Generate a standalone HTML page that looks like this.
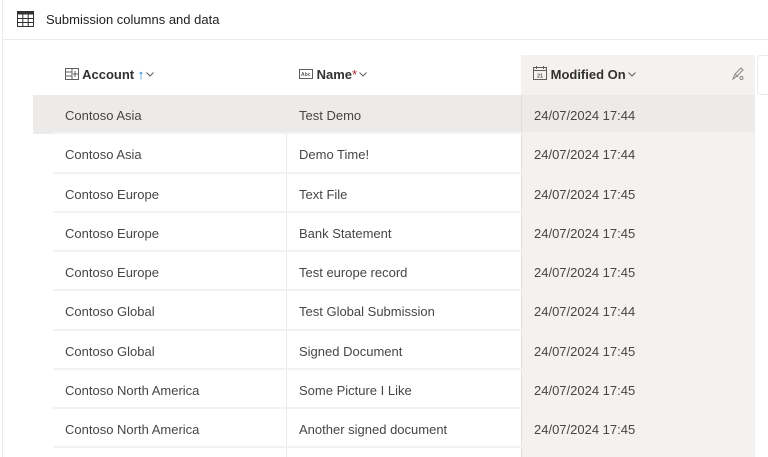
<!DOCTYPE html>
<html><head><meta charset="utf-8"><style>
*{margin:0;padding:0;box-sizing:border-box}
html,body{width:768px;height:457px;overflow:hidden}
body{background:#fff;font-family:"Liberation Sans",sans-serif;position:relative;color:#323130}
.abs{position:absolute}
.hdr{left:2px;top:0;width:766px;height:40px;border-bottom:1px solid #edebe9;border-left:1px solid #edebe9}
.title{left:46px;top:12px;font-size:13px;color:#201f1e}
.th{top:55px;height:39px;font-size:13px;font-weight:bold;color:#323130;line-height:39px}
.row{left:53px;width:702px;height:39.25px;border-bottom:2px solid #f3f2f1}
.cell{position:absolute;top:0;height:100%;line-height:41px;font-size:13px;color:#484644;padding-left:12px}
.c1{left:0;width:234px;border-right:1px solid #edebe9}
.c2{left:234px;width:234px}
.c3{left:468px;width:234px;background:#f3f2f1;border-left:1px solid #e1dfdd}
.chev{display:inline-block;vertical-align:2px;margin-left:2px}
</style></head><body>
<div class="abs hdr"></div>
<svg class="abs" style="left:17px;top:11px" width="17" height="16" viewBox="0 0 17 16"><rect x="0.5" y="0.5" width="16" height="15" fill="none" stroke="#323130"/><rect x="0.5" y="0.5" width="16" height="3" fill="#323130"/><path d="M5.8 3v13M11.2 3v13M0 7.5h17M0 11.5h17" stroke="#323130"/></svg>
<div class="abs title">Submission columns and data</div>
<div class="abs" style="left:521px;top:55px;width:234px;height:40px;background:#f3f2f1"></div>
<div class="abs" style="left:757px;top:55px;width:11px;height:40px;border:1px solid #edebe9;border-right:none;border-radius:4px 0 0 4px"></div>
<div class="abs th" style="left:65px"><svg width="14" height="12" viewBox="0 0 14 12" style="vertical-align:-1px"><rect x=".5" y=".5" width="13" height="11" fill="none" stroke="#605e5c"/><path d="M7 0v12M0 4h7M0 8h7M8 6h5M10 3v6" stroke="#605e5c"/></svg> Account <span style="color:#0078d4;font-weight:normal">↑</span><svg class="chev" width="8" height="5" viewBox="0 0 8 5"><path d="M.5.5L4 4 7.5.5" fill="none" stroke="#605e5c"/></svg></div>
<div class="abs th" style="left:299px"><svg width="14" height="10" viewBox="0 0 14 10" style="vertical-align:0"><rect x=".5" y=".5" width="13" height="9" fill="none" stroke="#605e5c"/><text x="2" y="7" font-size="5" fill="#605e5c" font-family="Liberation Sans">Abc</text></svg> Name<span style="color:#a4262c;font-weight:normal">*</span><svg class="chev" width="8" height="5" viewBox="0 0 8 5"><path d="M.5.5L4 4 7.5.5" fill="none" stroke="#605e5c"/></svg></div>
<div class="abs th" style="left:533px"><svg width="14" height="14" viewBox="0 0 14 14" style="vertical-align:-1px"><rect x=".5" y="1.5" width="13" height="12" fill="none" stroke="#605e5c"/><path d="M0 4.5h14M3.5 0v3M10.5 0v3" stroke="#605e5c"/><text x="4" y="11.5" font-size="5.5" fill="#605e5c" font-family="Liberation Sans">21</text></svg> Modified On<svg class="chev" width="8" height="5" viewBox="0 0 8 5"><path d="M.5.5L4 4 7.5.5" fill="none" stroke="#605e5c"/></svg></div>
<svg class="abs" style="left:732px;top:67px" width="13" height="13" viewBox="0 0 13 13"><path d="M1 12l2-5 6-6 2 2-6 6zM3 7l3 3M8 11a1.5 1.5 0 1 0 3 0a1.5 1.5 0 1 0-3 0" fill="none" stroke="#8a8886"/></svg>
<div class="abs" style="left:33px;top:95px;width:722px;height:39px;background:#edebe9"></div>
<div class="abs row" style="top:95px;background:transparent"><div class="cell c1" style="background:#edebe9">Contoso Asia</div><div class="cell c2" style="background:#edebe9">Test Demo</div><div class="cell c3" style="background:#edebe9">24/07/2024 17:44</div></div>
<div class="abs row" style="top:134.25px"><div class="cell c1">Contoso Asia</div><div class="cell c2">Demo Time!</div><div class="cell c3">24/07/2024 17:44</div></div>
<div class="abs row" style="top:173.5px"><div class="cell c1">Contoso Europe</div><div class="cell c2">Text File</div><div class="cell c3">24/07/2024 17:45</div></div>
<div class="abs row" style="top:212.75px"><div class="cell c1">Contoso Europe</div><div class="cell c2">Bank Statement</div><div class="cell c3">24/07/2024 17:45</div></div>
<div class="abs row" style="top:252px"><div class="cell c1">Contoso Europe</div><div class="cell c2">Test europe record</div><div class="cell c3">24/07/2024 17:45</div></div>
<div class="abs row" style="top:291.25px"><div class="cell c1">Contoso Global</div><div class="cell c2">Test Global Submission</div><div class="cell c3">24/07/2024 17:44</div></div>
<div class="abs row" style="top:330.5px"><div class="cell c1">Contoso Global</div><div class="cell c2">Signed Document</div><div class="cell c3">24/07/2024 17:45</div></div>
<div class="abs row" style="top:369.75px"><div class="cell c1">Contoso North America</div><div class="cell c2">Some Picture I Like</div><div class="cell c3">24/07/2024 17:45</div></div>
<div class="abs row" style="top:409px"><div class="cell c1">Contoso North America</div><div class="cell c2">Another signed document</div><div class="cell c3">24/07/2024 17:45</div></div>
<div class="abs row" style="top:448.25px;height:8.75px;border:none"><div class="cell c1"></div><div class="cell c2"></div><div class="cell c3"></div></div>
<div class="abs" style="left:2px;top:40px;width:1px;height:417px;background:#edebe9"></div>
</body></html>
